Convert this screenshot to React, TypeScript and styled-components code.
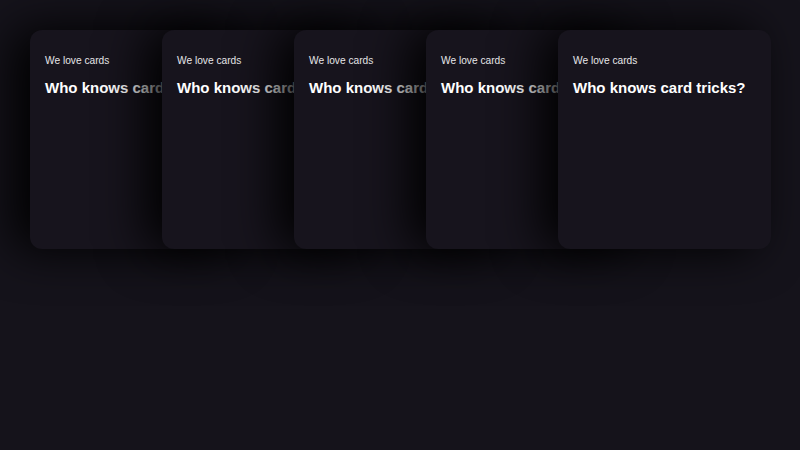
import React from "react";
import styled, { createGlobalStyle } from "styled-components";

const GlobalStyle = createGlobalStyle`
  html, body {
    margin: 0;
    padding: 0;
    background: #15131b;
    font-family: "Liberation Sans", Arial, sans-serif;
  }
`;

const Page = styled.div`
  width: 800px;
  height: 450px;
  box-sizing: border-box;
  background: #15131b;
  padding: 30px;
  overflow: hidden;
`;

const CardList = styled.section`
  display: flex;
`;

const Card = styled.article`
  flex: 0 0 213px;
  height: 219px;
  box-sizing: border-box;
  padding: 24px 15px;
  background: #17141d;
  border-radius: 12px;
  box-shadow: -1rem 0 3rem #000;
  overflow: hidden;
  white-space: nowrap;
  &:not(:first-child) {
    margin-left: -81px;
  }
`;

const CardHeader = styled.header`
  display: flex;
  flex-direction: column;
  gap: 10px;
`;

const Kicker = styled.p`
  margin: 0;
  font-size: 10.2px;
  line-height: 14px;
  color: #e6e6e9;
`;

const Title = styled.h2`
  margin: 0;
  font-size: 15px;
  line-height: 20px;
  font-weight: bold;
  color: #ffffff;
`;

export default function App() {
  const cards = Array.from({ length: 5 });
  return (
    <Page>
      <GlobalStyle />
      <CardList>
        {cards.map((_, i) => (
          <Card key={i}>
            <CardHeader>
              <Kicker>We love cards</Kicker>
              <Title>Who knows card tricks?</Title>
            </CardHeader>
          </Card>
        ))}
      </CardList>
    </Page>
  );
}
